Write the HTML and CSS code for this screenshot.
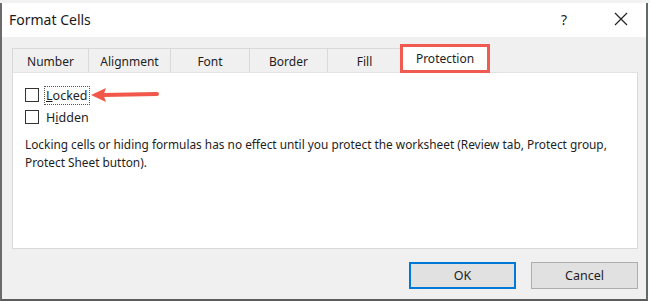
FILE: index.html
```html
<!DOCTYPE html>
<html>
<head>
<meta charset="utf-8">
<link rel="stylesheet" href="styles.css">
</head>
<body>
<div class="backdrop"></div>
<div class="dialog">
  <div class="titlebar">
    <span class="title">Format Cells</span>
    <span class="help">?</span>
    <span class="close"><svg width="14" height="14" viewBox="0 0 14 14"><path d="M1 1 L13 13 M13 1 L1 13" stroke="#222" stroke-width="1.2" fill="none"/></svg></span>
  </div>
  <div class="body">
    <div class="tabs">
      <div class="tab t-number">Number</div>
      <div class="tab t-align">Alignment</div>
      <div class="tab t-font">Font</div>
      <div class="tab t-border">Border</div>
      <div class="tab t-fill">Fill</div>
      <div class="tab active">Protection</div>
    </div>
    <div class="panel">
      <div class="check-row">
        <span class="box"></span>
        <span class="label focus"><u>L</u>ocked</span>
        <svg class="arrow" width="68" height="16" viewBox="0 0 68 16"><path d="M12 8 L66 7" stroke="#f2574c" stroke-width="4" stroke-linecap="round" fill="none"/><path d="M0 8 L15 1 L12.5 8 L15 15 Z" fill="#f2574c"/></svg>
      </div>
      <div class="check-row">
        <span class="box"></span>
        <span class="label">H<u>i</u>dden</span>
      </div>
      <p class="note">Locking cells or hiding formulas has no effect until you protect the worksheet (Review tab, Protect group, Protect Sheet button).</p>
    </div>
    <div class="buttons">
      <button class="btn default">OK</button>
      <button class="btn">Cancel</button>
    </div>
  </div>
</div>
</body>
</html>
```
FILE: styles.css
```css
html, body {
  margin: 0;
  padding: 0;
  background: #ffffff;
  width: 650px;
  height: 301px;
  overflow: hidden;
  font-family: "Noto Sans", "Open Sans", sans-serif;
  color: #1e1e1e;
}
.backdrop {
  height: 3px;
  background: #f2f2f2;
}
.dialog {
  width: 644px;
  height: 296px;
  border-left: 2px solid #6b6b6b;
  border-right: 2px solid #5f6a6a;
  border-bottom: 2px solid #5c5c5c;
  display: flex;
  flex-direction: column;
  background: #f0f0f0;
}
.titlebar {
  height: 34px;
  background: #ffffff;
  display: flex;
  align-items: center;
  padding-left: 7px;
}
.title {
  font-size: 14px;
  flex: 1;
  color: #1a1a1a;
  margin-top: -2px;
}
.help {
  font-size: 14px;
  width: 20px;
  margin-right: 33px;
  color: #222;
  margin-top: -2px;
}
.close {
  width: 32px;
  display: flex;
  margin-top: -2px;
}
.body {
  flex: 1;
  display: flex;
  flex-direction: column;
  padding: 10px 8px 0 10px;
}
.tabs {
  display: flex;
  height: 25px;
  align-items: flex-end;
}
.tab {
  height: 24px;
  box-sizing: border-box;
  border: 1px solid #d9d9d9;
  border-bottom: none;
  border-right: none;
  font-size: 12px;
  display: flex;
  align-items: center;
  justify-content: center;
  color: #1e1e1e;
  padding-top: 2px;
}
.t-number { width: 76px; }
.t-align { width: 82px; }
.t-font { width: 79px; }
.t-border { width: 78px; }
.t-fill { width: 75px; border-right: 1px solid #d9d9d9; }
.tab.active {
  width: 90px;
  height: 29px;
  background: #ffffff;
  border: 3px solid #f05a50;
  margin-left: -2px;
  margin-bottom: -1px;
  position: relative;
  z-index: 2;
  padding-top: 0;
}
.panel {
  height: 177px;
  box-sizing: border-box;
  background: #ffffff;
  border: 1px solid #d9d9d9;
  border-top: 1px solid #e3e3e3;
  padding: 13px 10px 0 12px;
}
.check-row {
  display: flex;
  align-items: center;
  height: 18px;
  margin-bottom: 4px;
}
.box {
  width: 14px;
  height: 14px;
  box-sizing: border-box;
  border: 1px solid #333333;
  background: #fff;
  margin-right: 5px;
}
.label {
  font-size: 12.5px;
  padding: 0 1px;
  border: 1px dotted transparent;
}
.label.focus {
  border: 1px dotted #555;
}
.arrow {
  margin-left: 1px;
}
.note {
  margin: 9px 0 0 0;
  font-size: 11.85px;
  line-height: 18px;
  color: #1e1e1e;
}
.buttons {
  display: flex;
  justify-content: flex-end;
  gap: 15px;
  padding-top: 13px;
}
.btn {
  width: 107px;
  height: 27px;
  box-sizing: border-box;
  background: #e1e1e1;
  border: 1px solid #adadad;
  font-family: "Noto Sans", sans-serif;
  font-size: 12.5px;
  color: #1e1e1e;
  padding: 0;
}
.btn.default {
  border: 2px solid #0078d7;
}
```
